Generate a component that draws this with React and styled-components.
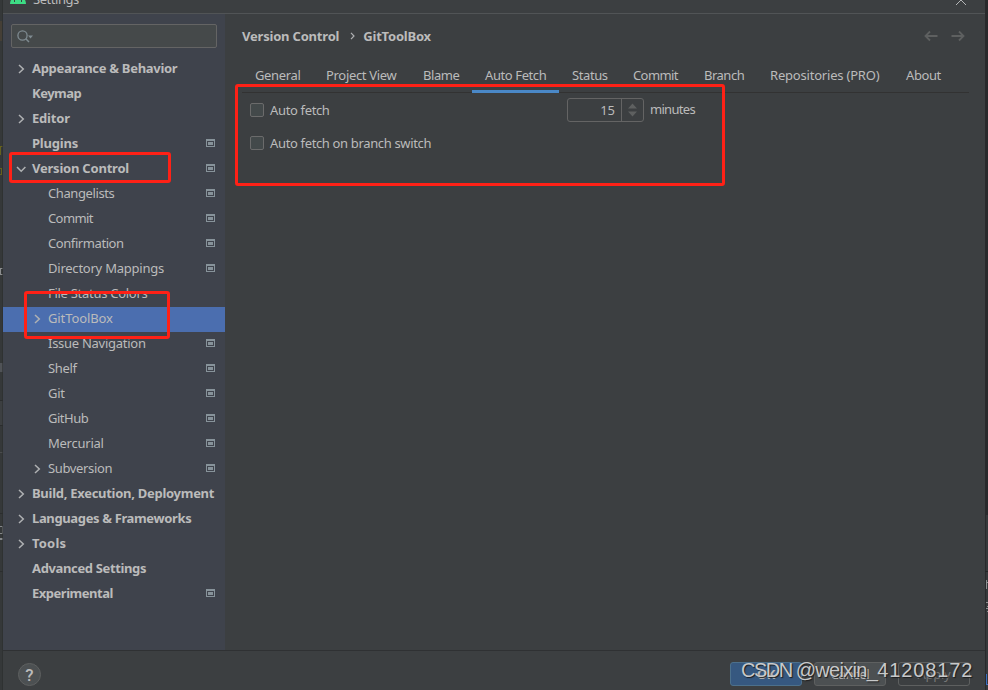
import React from "react";
import styled, { createGlobalStyle } from "styled-components";

const treeItems = [
  { label: "Appearance & Behavior", arrow: "right", bold: true, spacing: -0.3 },
  { label: "Keymap", bold: true, spacing: -0.5 },
  { label: "Editor", arrow: "right", bold: true, spacing: -0.2 },
  { label: "Plugins", bold: true, project: true, spacing: -0.2 },
  { label: "Version Control", arrow: "down", bold: true, project: true, spacing: -0.22 },
  { label: "Changelists", nested: true, project: true, spacing: -0.4 },
  { label: "Commit", nested: true, project: true, spacing: -0.6 },
  { label: "Confirmation", nested: true, project: true, spacing: -0.42 },
  { label: "Directory Mappings", nested: true, project: true, spacing: -0.23 },
  { label: "File Status Colors", nested: true, spacing: -0.28 },
  { label: "GitToolBox", arrow: "right", nested: true, selected: true, spacing: -0.1 },
  { label: "Issue Navigation", nested: true, project: true, spacing: -0.27 },
  { label: "Shelf", nested: true, project: true, spacing: -0.35 },
  { label: "Git", nested: true, project: true, spacing: -0.3 },
  { label: "GitHub", nested: true, project: true, spacing: -0.5 },
  { label: "Mercurial", nested: true, project: true, spacing: -0.25 },
  { label: "Subversion", arrow: "right", nested: true, project: true, spacing: -0.35 },
  { label: "Build, Execution, Deployment", arrow: "right", bold: true, spacing: -0.28 },
  { label: "Languages & Frameworks", arrow: "right", bold: true, spacing: -0.36 },
  { label: "Tools", arrow: "right", bold: true, spacing: 0.2 },
  { label: "Advanced Settings", bold: true, spacing: -0.36 },
  { label: "Experimental", bold: true, project: true, spacing: -0.48 },
];

const tabs = [
  { label: "General", width: 71, spacing: -0.35 },
  { label: "Project View", width: 97, spacing: -0.32 },
  { label: "Blame", width: 62, spacing: -0.45 },
  { label: "Auto Fetch", width: 87, active: true, spacing: -0.4 },
  { label: "Status", width: 61, spacing: -0.4 },
  { label: "Commit", width: 71, spacing: -0.6 },
  { label: "Branch", width: 66, spacing: -0.5 },
  { label: "Repositories (PRO)", width: 136, spacing: -0.2 },
  { label: "About", width: 61, spacing: -0.4 },
];

const TreeArrow = ({ direction }) => (
  <ArrowSvg width="12" height="12" viewBox="0 0 12 12" fill="none" stroke="#afb1b3" strokeWidth="1.5">
    {direction === "right" && <path d="M4 2 L8.3 6 L4 10" />}
    {direction === "down" && <path d="M2 4 L6.2 8.3 L10.4 4" />}
  </ArrowSvg>
);

const ProjectIcon = () => (
  <ProjectSvg width="9" height="8" viewBox="0 0 9 8" shapeRendering="crispEdges">
    <path fill="#87939a" fillRule="evenodd" d="M0 0h9v8H0z M1 2v5h7V2z" />
    <path fill="#87939a" d="M2 3h5v3H2z" />
  </ProjectSvg>
);

// slivers of the editor window showing on both sides of the dialog
const LeftEdge = () => (
  <svg width="3" height="690" viewBox="0 0 3 690" shapeRendering="crispEdges">
    <path fill="#353839" d="M0 0h3v690H0z" />
    <path fill="#453f36" d="M0 21h2v20H0z" />
    <path fill="#66611d" d="M0 146h3v1H0z M0 147h1v8H0z M1 168h1v7H1z M0 168h1v1H0z M0 174h1v1H0z" />
    <path fill="#8b8d8e" d="M0 268h3v1H0z M0 269h1v5H0z M0 274h3v1H0z" />
    <path fill="#505357" d="M0 363h3v9H0z" />
    <path fill="#3c3f41" d="M0 401h3v24H0z" />
    <path fill="#2b2d2e" d="M0 400h3v1H0z M0 425h3v1H0z M0 513h3v1H0z M0 571h3v1H0z" />
    <path fill="#4a4c4d" d="M0 452h3v1H0z" />
    <path fill="#85888a" d="M0 526h3v1H0z M2 527h1v7H2z M0 533h2v1H0z M0 538h3v2H0z" />
    <path fill="#2c2e2f" d="M2 0h1v690H2z" opacity="0.6" />
  </svg>
);

const RightEdge = () => (
  <svg width="3" height="690" viewBox="0 0 3 690" shapeRendering="crispEdges">
    <path fill="#292a2c" d="M0 0h3v690H0z" />
    <path fill="#36393b" d="M1 515h2v175H1z" />
    <path fill="#232526" d="M0 571h3v1H0z" />
    <path fill="#8c8f91" d="M1 580h1v9H1z M2 582h1v1H2z M1 602h2v1H1z M2 606h1v1H2z M1 608h2v1H1z M2 611h1v1H2z" />
    <path fill="#3b6fc4" d="M1 674h1v11H1z M2 684h1v1H2z" />
  </svg>
);

const App = () => {
  return (
    <Screen>
      <GlobalStyle />
      <LeftEdge />
      <Dialog>
        <TitleBar>
          <svg width="16" height="16" viewBox="0 0 16 16">
            <path fill="#3ddc84" d="M0 14a8 8.5 0 0 1 16 0z" />
            <path fill="#3c3f41" d="M4 10h1v2H4z M11 10h1v2h-1z" />
          </svg>
          <Title>Settings</Title>
          <svg width="12" height="12" viewBox="0 0 12 12" stroke="#b4b6b7" fill="none">
            <path d="M1 1 L11 11 M11 1 L1 11" />
          </svg>
        </TitleBar>
        <Body>
          <Sidebar>
            <Search>
              <svg width="20" height="16" viewBox="0 0 20 16">
                <circle cx="6.5" cy="6.5" r="4.6" fill="none" stroke="#7f8b91" strokeWidth="1.3" />
                <path d="M9.8 9.8 L13 13" stroke="#7f8b91" strokeWidth="1.5" />
                <path d="M12 6.5h5l-2.5 3z" fill="#7f8b91" />
              </svg>
            </Search>
            {treeItems.map((item) => (
              <TreeRow key={item.label} $nested={item.nested} $selected={item.selected}>
                <TreeArrow direction={item.arrow} />
                <TreeLabel $bold={item.bold} $spacing={item.spacing}>
                  {item.label}
                </TreeLabel>
                {item.project && <ProjectIcon />}
              </TreeRow>
            ))}
            <Highlight $left={6} $top={138} $width={162} $height={31} />
            <Highlight $left={21} $top={277} $width={146} $height={48} />
          </Sidebar>
          <Content>
            <Header>
              <Crumb>Version Control</Crumb>
              <Separator width="6" height="8" viewBox="0 0 6 8" fill="none" stroke="#afb1b3" strokeWidth="1.2">
                <path d="M1 0.8 L4 4 L1 7.2" />
              </Separator>
              <Crumb>GitToolBox</Crumb>
              <NavArrows>
                <svg width="14" height="12" viewBox="0 0 14 12" fill="none" stroke="#5e6060" strokeWidth="1.8">
                  <path d="M13.5 6H1.5 M6 1.5L1.5 6L6 10.5" />
                </svg>
                <svg width="14" height="12" viewBox="0 0 14 12" fill="none" stroke="#5e6060" strokeWidth="1.8">
                  <path d="M0.5 6H12.5 M8 1.5L12.5 6L8 10.5" />
                </svg>
              </NavArrows>
            </Header>
            <TabBar>
              {tabs.map((tab) => (
                <Tab key={tab.label} $width={tab.width} $active={tab.active} $spacing={tab.spacing}>
                  {tab.label}
                </Tab>
              ))}
            </TabBar>
            <Options>
              <OptionRow>
                <Checkbox />
                <OptionLabel $width={297}>Auto fetch</OptionLabel>
                <Spinner>
                  <SpinnerValue>15</SpinnerValue>
                  <SpinnerButtons>
                    <svg width="9" height="14" viewBox="0 0 9 14" fill="#5e6060">
                      <path d="M0 5.5L4.5 0.5L9 5.5z M0 8.5L4.5 13.5L9 8.5z" />
                    </svg>
                  </SpinnerButtons>
                </Spinner>
                <Unit>minutes</Unit>
              </OptionRow>
              <OptionRow>
                <Checkbox />
                <OptionLabel>Auto fetch on branch switch</OptionLabel>
              </OptionRow>
            </Options>
            <Highlight $left={10} $top={70} $width={490} $height={102} />
          </Content>
        </Body>
        <Footer>
          <HelpButton>?</HelpButton>
          <Button $primary>OK</Button>
          <Button>Cancel</Button>
          <Button $disabled>Apply</Button>
        </Footer>
      </Dialog>
      <RightEdge />
      <Watermark>
        <WatermarkPart $spacing={-1.5}>CSDN </WatermarkPart>
        <WatermarkPart $spacing={-0.7}>@weixin_</WatermarkPart>
        <WatermarkPart $spacing={0.9}>41208172</WatermarkPart>
      </Watermark>
    </Screen>
  );
};

export default App;

const GlobalStyle = createGlobalStyle`
  * {
    box-sizing: border-box;
  }

  body {
    margin: 0;
    overflow: hidden;
    font-family: "Noto Sans", sans-serif;
    font-size: 13px;
    color: #bbbbbb;
  }

  svg {
    display: block;
    flex-shrink: 0;
  }
`;

const Screen = styled.div`
  position: relative;
  display: flex;
  width: 988px;
  height: 690px;
  overflow: hidden;
  background: #2b2b2b;
`;

const Dialog = styled.div`
  display: flex;
  flex: 1;
  flex-direction: column;
  height: 690px;
  background: #3c3f41;
`;

const TitleBar = styled.div`
  display: flex;
  align-items: flex-end;
  height: 14px;
  padding: 0 18px 7px 7px;
  border-bottom: 1px solid #515456;
`;

const Title = styled.span`
  flex: 1;
  margin-left: 7px;
  margin-bottom: -2px;
  line-height: 18px;
  letter-spacing: -0.45px;
`;

const Body = styled.div`
  display: flex;
  height: 636px;
`;

const Sidebar = styled.div`
  position: relative;
  width: 222px;
  padding-top: 10px;
  background: #3f434c;
`;

const Search = styled.div`
  display: flex;
  align-items: center;
  width: 206px;
  height: 24px;
  margin: 0 8px 9px;
  padding: 1px 0 0 4px;
  background: #45494a;
  border: 1px solid #646464;
  border-radius: 2px;
`;

const TreeRow = styled.div`
  display: flex;
  align-items: center;
  height: 25px;
  padding-left: ${({ $nested }) => ($nested ? 28 : 12)}px;
  padding-right: 10px;
  background: ${({ $selected }) => ($selected ? "#4b6eaf" : "transparent")};
`;

const ArrowSvg = styled.svg`
  margin-bottom: 2px;
`;

const ProjectSvg = styled.svg`
  margin-bottom: 3px;
`;

const TreeLabel = styled.span`
  flex: 1;
  margin-left: 5px;
  padding-bottom: 4px;
  line-height: 18px;
  white-space: nowrap;
  font-weight: ${({ $bold }) => ($bold ? 700 : 400)};
  letter-spacing: ${({ $spacing }) => $spacing}px;
`;

const Highlight = styled.div`
  position: absolute;
  left: ${({ $left }) => $left}px;
  top: ${({ $top }) => $top}px;
  width: ${({ $width }) => $width}px;
  height: ${({ $height }) => $height}px;
  border: 3px solid #ff2116;
  border-radius: 3px;
`;

const Content = styled.div`
  position: relative;
  flex: 1;
  padding: 0 16px 0 17px;
`;

const Header = styled.div`
  display: flex;
  align-items: center;
  height: 44px;
`;

const Crumb = styled.span`
  font-weight: 700;
  line-height: 18px;
  letter-spacing: -0.2px;
`;

const Separator = styled.svg`
  margin: 0 7px 0 11px;
`;

const NavArrows = styled.div`
  display: flex;
  gap: 13px;
  margin-left: auto;
  padding-right: 4px;
`;

const TabBar = styled.div`
  display: flex;
  height: 35px;
  border-bottom: 1px solid #323232;
`;

const Tab = styled.div`
  width: ${({ $width }) => $width}px;
  height: 35px;
  padding: 8px 0 0 13px;
  line-height: 18px;
  letter-spacing: ${({ $spacing }) => $spacing}px;
  white-space: nowrap;
  border-bottom: 3px solid ${({ $active }) => ($active ? "#4a88c7" : "transparent")};
`;

const Options = styled.div`
  display: flex;
  flex-direction: column;
  padding: 5px 0 0 8px;
  gap: 9px;
`;

const OptionRow = styled.div`
  display: flex;
  align-items: center;
  height: 24px;
`;

const Checkbox = styled.div`
  width: 14px;
  height: 14px;
  background: #43494a;
  border: 1px solid #6b6b6b;
  border-radius: 2px;
`;

const OptionLabel = styled.span`
  width: ${({ $width }) => ($width ? `${$width}px` : "auto")};
  margin-left: 6px;
  line-height: 18px;
  letter-spacing: -0.35px;
`;

const Spinner = styled.div`
  display: flex;
  width: 77px;
  height: 24px;
  border: 1px solid #646464;
  border-radius: 3px;
`;

const SpinnerValue = styled.span`
  width: 53px;
  padding-right: 6px;
  line-height: 23px;
  text-align: right;
`;

const SpinnerButtons = styled.div`
  display: flex;
  flex: 1;
  align-items: center;
  justify-content: center;
  border-left: 1px solid #646464;
`;

const Unit = styled.span`
  margin-left: 6px;
  padding-bottom: 2px;
  line-height: 18px;
  letter-spacing: -0.7px;
`;

const Footer = styled.div`
  display: flex;
  align-items: center;
  gap: 12px;
  height: 40px;
  padding: 7px 15px 0;
  border-top: 1px solid #2f3133;
`;

const HelpButton = styled.div`
  width: 23px;
  height: 23px;
  margin-right: auto;
  background: #4c5052;
  border: 1px solid #5e6060;
  border-radius: 50%;
  font-family: Roboto, sans-serif;
  font-size: 17px;
  font-weight: 500;
  line-height: 22px;
  text-align: center;
`;

const Button = styled.div`
  width: 72px;
  height: 24px;
  line-height: 22px;
  text-align: center;
  border: 1px solid ${({ $primary }) => ($primary ? "#4c708c" : "#5e6060")};
  border-radius: 3px;
  background: ${({ $primary, $disabled }) => ($primary ? "#365880" : $disabled ? "transparent" : "#4c5052")};
  color: ${({ $disabled }) => ($disabled ? "#777777" : "#bbbbbb")};
  font-weight: ${({ $primary }) => ($primary ? 700 : 400)};
  letter-spacing: -0.3px;
`;

const Watermark = styled.div`
  position: absolute;
  left: 741px;
  top: 659px;
  display: flex;
  white-space: pre;
  font-family: "Liberation Sans", sans-serif;
  font-size: 20px;
  line-height: 23px;
  color: #c8c9ca;
  text-shadow: 1px 1px 1px #1d1e1f;
`;

const WatermarkPart = styled.span`
  letter-spacing: ${({ $spacing }) => $spacing}px;
`;
